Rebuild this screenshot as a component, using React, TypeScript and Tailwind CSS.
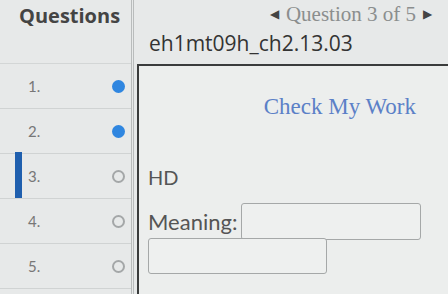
import React from "react";

const rows = [
  { n: "1.", done: true },
  { n: "2.", done: true },
  { n: "3.", done: false, active: true },
  { n: "4.", done: false },
  { n: "5.", done: false },
];

export default function App() {
  return (
    <div className="w-[448px] h-[294px] overflow-hidden bg-[#e7e9e9] flex" style={{ fontFamily: "Lato, 'Open Sans', sans-serif" }}>
      {/* Left column */}
      <div className="w-[134px] shrink-0 flex flex-col border-r-[3px] border-double border-[#b9bcbc]">
        <div className="h-[64px] shrink-0 pl-[19px] pt-[1px] border-b border-[#d3d6d6]">
          <span className="text-[20px] font-bold text-[#444]" style={{ fontFamily: "'Open Sans', sans-serif" }}>Questions</span>
        </div>
        {rows.map((r) => (
          <div key={r.n} className="relative h-[45px] shrink-0 border-b border-[#d0d3d3] flex items-center pl-[28px] pr-[6px]">
            {r.active && <div className="absolute left-[15px] top-[-2px] w-[7px] h-[46px] bg-[#1f5fae]" />}
            <span className="text-[15px] text-[#777] flex-1">{r.n}</span>
            {r.done ? (
              <span className="w-[13px] h-[13px] rounded-full bg-[#2f86e0]" />
            ) : (
              <span className="w-[13px] h-[13px] rounded-full border-2 border-[#a4a7a8]" />
            )}
          </div>
        ))}
      </div>
      {/* Right column */}
      <div className="flex-1 flex flex-col">
        <div className="h-[64px] shrink-0 flex flex-col pl-[15px]">
          <div className="flex justify-end items-center pr-[17px] pt-[1px] gap-[7px] text-[#8b8e8e]" style={{ fontFamily: "'Liberation Serif', serif" }}>
            <span className="text-[12px] text-[#444]">◀</span>
            <span className="text-[21px] leading-[26px]">Question 3 of 5</span>
            <span className="text-[12px] text-[#444] mr-[9px]">▶</span>
          </div>
          <div className="text-[21px] text-[#333] leading-none mt-[6px]" style={{ fontFamily: "'Open Sans', sans-serif" }}>eh1mt09h_ch2.13.03</div>
        </div>
        <div className="flex-1 ml-[3px] border-t-[2px] border-l-[2px] border-[#3a3c3c] bg-[#eceeed] pl-[9px] pr-[20px]">
          <div className="flex justify-end mt-[24px] pr-[22px]">
            <span className="text-[23px] text-[#5b80c7]" style={{ fontFamily: "'Liberation Serif', serif" }}>Check My Work</span>
          </div>
          <div className="mt-[37px] text-[20px] text-[#555]">HD</div>
          <div className="mt-[11px] flex flex-wrap items-center text-[22px] text-[#555] w-[290px]">
            <span className="mr-[4px]">Meaning:</span>
            <span className="inline-block w-[180px] h-[37px] border border-[#a5a8a8] rounded-[3px] bg-[#eef0ef]" />
            <span className="inline-block w-[179px] h-[36px] border border-[#a5a8a8] rounded-[3px] bg-[#eef0ef] -mt-[2px]" />
          </div>
        </div>
      </div>
    </div>
  );
}
